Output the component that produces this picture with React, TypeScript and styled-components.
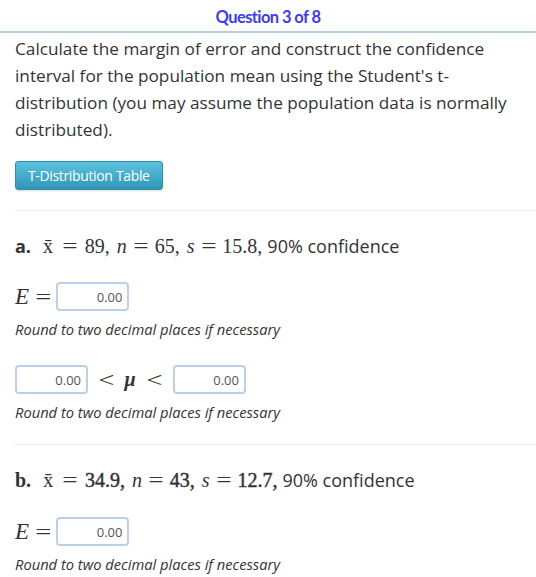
import React from 'react';
import styled, { createGlobalStyle } from 'styled-components';

const GlobalStyle = createGlobalStyle`
  body {
    margin: 0;
    background: #fff;
    font-family: "Open Sans", "Noto Sans", sans-serif;
    color: #333;
  }
`;

const Header = styled.div`
  height: 33px;
  display: flex;
  align-items: center;
  justify-content: center;
  border-bottom: 2px solid #b8cce6;
  font-family: Lato, sans-serif;
  font-weight: 700;
  font-size: 16.5px;
  letter-spacing: -0.6px;
  color: #3b3bf3;
  padding-top: 2px;
  box-sizing: border-box;
`;

const Body = styled.div`
  padding: 0 0 0 15px;
`;

const Prompt = styled.p`
  margin: 2px 0 0;
  font-size: 17.2px;
  line-height: 27px;
  color: #333;
`;

const InfoButton = styled.button`
  margin-top: 18px;
  height: 29px;
  padding: 0 12px;
  border: 1px solid #2f8fae;
  border-radius: 3px;
  background: linear-gradient(#5bc2e0, #2f97b5);
  color: #fff;
  font-family: "Open Sans", sans-serif;
  font-size: 14px;
  letter-spacing: -0.35px;
  box-shadow: 0 1px 2px rgba(0, 0, 0, 0.15);
  cursor: pointer;
`;

const Rule = styled.hr<{ $top: number }>`
  margin: ${(p) => p.$top}px 0 0;
  border: none;
  border-top: 1px solid #ebebeb;
`;

const Problem = styled.div<{ $top: number }>`
  margin-top: ${(p) => p.$top}px;
  font-size: 18px;
  line-height: 27px;
  display: flex;
  align-items: baseline;
  white-space: pre;
`;

const Label = styled.b<{ $serif?: boolean }>`
  font-family: ${(p) => (p.$serif ? '"Liberation Serif", serif' : '"Open Sans", sans-serif')};
  font-size: ${(p) => (p.$serif ? 20 : 18)}px;
  font-weight: 700;
  margin-right: 12px;
`;

const Num = styled.span<{ $heavy?: boolean }>`
  font-family: "Liberation Serif", "DejaVu Serif", serif;
  font-size: 20px;
  margin-right: 7px;
  -webkit-text-stroke: ${(p) => (p.$heavy ? '0.45px #333' : '0')};
`;

const Rel = styled.span<{ $gap?: number }>`
  font-family: "Liberation Serif", "DejaVu Serif", serif;
  font-size: 21px;
  transform: scaleX(1.3);
  display: inline-block;
  margin: 0 ${(p) => p.$gap ?? 8}px;
`;

const MathVar = styled.i<{ $size?: number; $bold?: boolean }>`
  font-family: "Liberation Serif", "DejaVu Serif", serif;
  font-size: ${(p) => p.$size ?? 20}px;
  font-weight: ${(p) => (p.$bold ? 700 : 400)};
`;

const Xbar = styled.span`
  font-family: "Liberation Serif", "DejaVu Serif", serif;
  font-size: 20px;
  margin-right: 2px;
`;

const AnswerRow = styled.div<{ $top: number; $gap: number }>`
  margin-top: ${(p) => p.$top}px;
  display: flex;
  align-items: center;
  gap: ${(p) => p.$gap}px;
`;

const Box = styled.input`
  width: 73px;
  height: 29px;
  box-sizing: border-box;
  border: 2px solid #bcd0e8;
  border-radius: 4px;
  text-align: right;
  padding: 0 5px;
  font-family: "Open Sans", sans-serif;
  font-size: 13px;
  color: #555;
  outline: none;
`;

const Sym = styled.span`
  font-family: "Liberation Serif", "DejaVu Serif", serif;
  font-size: 22px;
  color: #333;
  display: inline-block;
  transform: scaleX(1.3);
`;

const Hint = styled.div<{ $top?: number }>`
  margin-top: ${(p) => p.$top ?? 7}px;
  font-style: italic;
  font-size: 14.7px;
  line-height: 20px;
  color: #333;
`;

type Stats = { label: string; mean: string; n: string; s: string; heavy?: boolean };

const ProblemLine = ({ label, mean, n, s, heavy }: Stats) => (
  <>
    <Label $serif={heavy}>{label}</Label>
    <Xbar>x̄</Xbar>
    <Rel $gap={9}>=</Rel>
    <Num $heavy={heavy}>{mean},</Num>
    <MathVar>n</MathVar>
    <Rel>=</Rel>
    <Num $heavy={heavy}>{n},</Num>
    <MathVar>s</MathVar>
    <Rel>=</Rel>
    <Num $heavy={heavy} style={{ marginRight: 5 }}>
      {s},
    </Num>
    90% confidence
  </>
);

const MarginRow = ({ top }: { top: number }) => (
  <AnswerRow $top={top} $gap={5}>
    <MathVar $size={23}>E</MathVar>
    <Sym style={{ margin: '0 2px 0 3px' }}>=</Sym>
    <Box defaultValue="0.00" />
  </AnswerRow>
);

const hint = 'Round to two decimal places if necessary';

const App = () => {
  return (
    <>
      <GlobalStyle />
      <Header>Question 3 of 8</Header>
      <Body>
        <Prompt>
          Calculate the margin of error and construct the confidence interval for the population mean
          using the Student's t-distribution (you may assume the population data is normally
          distributed).
        </Prompt>
        <InfoButton>T-Distribution Table</InfoButton>
        <Rule $top={20} />

        <Problem $top={22}>
          <ProblemLine label="a." mean="89" n="65" s="15.8" />
        </Problem>
        <MarginRow top={22} />
        <Hint $top={8}>{hint}</Hint>
        <AnswerRow $top={26} $gap={12}>
          <Box defaultValue="0.00" />
          <Sym>&lt;</Sym>
          <MathVar $bold>μ</MathVar>
          <Sym>&lt;</Sym>
          <Box defaultValue="0.00" style={{ marginLeft: 1 }} />
        </AnswerRow>
        <Hint $top={8}>{hint}</Hint>
        <Rule $top={22} />

        <Problem $top={22}>
          <ProblemLine label="b." mean="34.9" n="43" s="12.7" heavy />
        </Problem>
        <MarginRow top={23} />
        <Hint $top={8}>{hint}</Hint>
      </Body>
    </>
  );
};

export default App;
